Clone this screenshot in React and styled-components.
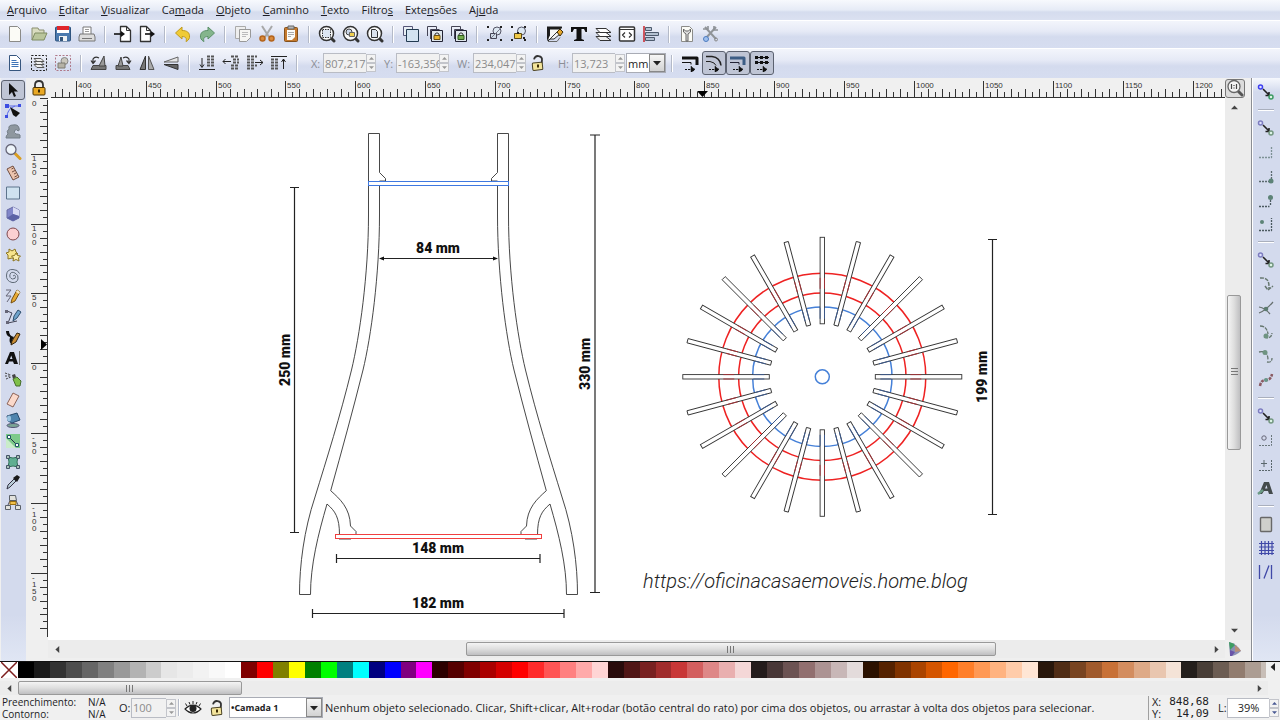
import React from 'react';
import styled, { createGlobalStyle } from 'styled-components';

const GlobalStyle = createGlobalStyle`
  * { box-sizing: border-box; }
  body { margin: 0; }
  body, button, input, select {
    font-family: "Open Sans", "Noto Sans", sans-serif;
    font-size: 11px;
    color: #1c1c24;
  }
  button { border: 0; padding: 0; background: none; }
`;

const Window = styled.div`
  display: flex;
  flex-direction: column;
  height: 100vh;
  overflow: hidden;
  background: #f0f0f0;
`;

/* ---------- icons ---------- */

const IconSvg = styled.svg`
  display: block;
  flex: none;
  width: 18px;
  height: 18px;
  fill: none;
  stroke-linejoin: round;
`;

const sheet = <path d="M3.5 1.5h8l3 3v12h-11z" fill="#fbfbf6" stroke="#8b8b88" />;
const lens = (
  <>
    <path d="M12.5 12.5l3.500 3.500" stroke="#333" strokeWidth="3" strokeLinecap="round" />
    <circle cx="8.500" cy="8.500" r="7" fill="#fafafa" stroke="#333" strokeWidth="1.500" />
  </>
);
const nodeLink = (a, b) => (
  <>
    <path d="M6 6l6 6M12 9v3.500H8.500" stroke="#222" strokeWidth="1.600" />
    <circle cx="3.500" cy="4" r="2" fill="#dfe3ff" stroke={a} strokeWidth="1.500" />
    <circle cx="14" cy="14" r="2" fill="#dcf3e4" stroke={b} strokeWidth="1.500" />
  </>
);
const corners = <path d="M1 1h2v2H1zM14 1h2v2h-2zM1 14h2v2H1zM14 14h2v2h-2z" fill="#222" />;
const pushArrow = <path d="M4 15.500h8M10 12.500l4 3-4 3z" fill="#111" stroke="#111" strokeDasharray="2 1" />;

const icons = {
  new: sheet,
  open: (
    <>
      <path d="M2 15V3h6l1 2h5v3" fill="#d9dcc0" stroke="#8a8f70" />
      <path d="M5 8h12l-3 7H2z" fill="#b9c59b" stroke="#7f8c62" />
    </>
  ),
  save: (
    <>
      <rect x="1.500" y="2" width="15" height="14" rx="1" fill="#4a79ae" stroke="#30557f" />
      <path d="M3 1h12v4H3z" fill="#e0262b" />
      <path d="M3 5h12v3H3z" fill="#fff" />
      <path d="M5 11h8v5H5z" fill="#eef1f4" />
      <path d="M6 12h3v4H6z" fill="#34567c" />
    </>
  ),
  print: (
    <>
      <path d="M5 9V2h8v7" fill="#fff" stroke="#777" />
      <path d="M7 4.500h4M7 6.500h4" stroke="#999" />
      <path d="M2 9h14l1 3v4H1v-4z" fill="#dcdcdc" stroke="#777" />
      <path d="M4 13.500h10" stroke="#777" />
    </>
  ),
  import: (
    <>
      <path d="M6.500 1.500h6l4 4v11h-10z" fill="#fff" stroke="#333" strokeWidth="1.300" />
      <path d="M12.500 1.500v4h4" stroke="#333" />
      <path d="M0 9h8" stroke="#111" strokeWidth="1.600" />
      <path d="M7 6l4 3-4 3z" fill="#111" />
    </>
  ),
  export: (
    <>
      <path d="M2.500 1.500h6l4 4v11h-10z" fill="#fff" stroke="#333" strokeWidth="1.300" />
      <path d="M8.500 1.500v4h4" stroke="#333" />
      <path d="M7 9h7" stroke="#111" strokeWidth="1.600" />
      <path d="M13 6l4 3-4 3z" fill="#111" />
    </>
  ),
  undo: <path d="M1.500 8L8 2v3.500c5 0 8 2 7.500 7-.5 2-2 3.500-3.500 4 1-3 0-5-4-5V14z" fill="#f0cb36" stroke="#c09a1c" />,
  redo: <path d="M16.500 8L10 2v3.500c-5 0-8 2-7.500 7 .5 2 2 3.500 3.500 4-1-3 0-5 4-5V14z" fill="#84b58c" stroke="#5b9068" />,
  copy: (
    <>
      <rect x="1.500" y="1.500" width="10" height="12" fill="#eee" stroke="#aaa" />
      <path d="M5.500 4.500h11v8l-4 4h-7z" fill="#f6f6f3" stroke="#999" />
      <path d="M8 7.500h6M8 9.500h6M8 11.500h4" stroke="#bbb" />
    </>
  ),
  cut: (
    <>
      <path d="M4 1l7 11M14 1L7 12" stroke="#a8a8a8" strokeWidth="2" />
      <circle cx="4.500" cy="13.500" r="2.500" fill="#d88a3c" stroke="#b4641c" strokeWidth="1.500" />
      <circle cx="13.500" cy="13.500" r="2.500" fill="#d88a3c" stroke="#b4641c" strokeWidth="1.500" />
    </>
  ),
  paste: (
    <>
      <rect x="2.500" y="2.500" width="13" height="14" rx="1" fill="#c57a2e" stroke="#83501c" />
      <path d="M5 5h8v7l-3 3H5z" fill="#fbfbf8" />
      <path d="M6 7.500h6M6 9.500h6M6 11.500h3" stroke="#aaa" />
      <rect x="6" y="1" width="6" height="3" fill="#b8b8b8" stroke="#666" />
    </>
  ),
  zoomSelection: <>{lens}<rect x="4.500" y="4.500" width="8" height="8" fill="#dde6f2" stroke="#333" strokeDasharray="1.500 1" /></>,
  zoomDrawing: <>{lens}<circle cx="7" cy="7" r="3" fill="#cbd6e8" stroke="#444" /><rect x="7.500" y="7.500" width="5" height="4" fill="#f0cf4e" stroke="#666" /></>,
  zoomPage: <>{lens}<path d="M5.500 4.500h4l2 2v6h-6z" fill="#dbe2ec" stroke="#333" /></>,
  duplicate: (
    <>
      <rect x="1.500" y="1.500" width="9" height="9" fill="#e9eff5" stroke="#557" />
      <rect x="4.500" y="4.500" width="12" height="12" fill="#d3e3f1" stroke="#223a50" />
    </>
  ),
  clone: (
    <>
      <path d="M1.500 11V1.500h9v3M4.500 14V4.500h9" stroke="#445" />
      <rect x="5.500" y="5.500" width="11" height="11" fill="#dfe6ec" stroke="#223" />
      <path d="M9 11V9q2-2.500 4 0v2" stroke="#333" />
      <rect x="8" y="10.500" width="6" height="4" fill="#e9b430" stroke="#6d5010" />
    </>
  ),
  unlinkClone: (
    <>
      <path d="M1.500 11V1.500h9v3M4.500 14V4.500h9" stroke="#445" />
      <rect x="5.500" y="5.500" width="11" height="11" fill="#dfe6ec" stroke="#223" />
      <path d="M9 11V9q2-2.500 4 0v1" stroke="#333" />
      <rect x="8" y="10.500" width="6" height="4" fill="#73ad4c" stroke="#2f5a1c" />
    </>
  ),
  group: (
    <>
      {corners}
      <circle cx="11" cy="6" r="4" fill="#dce7f2" stroke="#556" />
      <path d="M4.500 8.500h6v5h-6z" fill="#cfdbe8" stroke="#445" />
      <path d="M4 14L14 4" stroke="#778" />
    </>
  ),
  ungroup: (
    <>
      {corners}
      <circle cx="11.500" cy="6" r="4" fill="#dce7f2" stroke="#556" />
      <path d="M4.500 8.500h7v5h-7z" fill="#f0c948" stroke="#5d4b14" />
      <path d="M7 7h2v2H7zM13 12h2v2h-2z" fill="#222" />
    </>
  ),
  fill: (
    <>
      <path d="M2 2.500h14L2 16z" fill="#f7f7f7" stroke="#222" />
      <path d="M1 1.500h15l-2 3H4v6l-3 5z" fill="#1c1c1c" />
      <path d="M2 16.500h9l3-4" stroke="#666" />
      <path d="M4 14L12 6l2 3-6 5z" fill="#f4f4f4" stroke="#333" />
      <path d="M11 7l3-3 3 3-3 4z" fill="#e4a62c" stroke="#3d2c08" />
    </>
  ),
  text: <path d="M1 2h16v5h-1.500L14 4h-2.500v10l2.500 1v1H4v-1l2.500-1V4H4L2.500 7H1z" fill="#111" />,
  layers: (
    <>
      <path d="M2 11.500h10l5 4H6z" fill="#eee" stroke="#333" />
      <path d="M2 7.500h10l5 4H6z" fill="#fff" stroke="#333" />
      <path d="M2 3.500h10l5 4H6z" fill="#fff" stroke="#333" />
    </>
  ),
  xml: (
    <>
      <rect x="1.500" y="2" width="15" height="14" rx="1" fill="#fff" stroke="#333" strokeWidth="1.500" />
      <path d="M2 4.500h14" stroke="#333" />
      <path d="M7 7.500L4.500 10 7 12.500M11 7.500l2.500 2.500-2.500 2.500" stroke="#333" strokeWidth="1.200" />
    </>
  ),
  align: (
    <>
      <path d="M2 1v16" stroke="#c8252b" strokeWidth="1.500" />
      <path d="M3.500 2.500h6v3h-6zM3.500 7.500h13v3h-13zM3.500 12.500h9v3h-9z" fill="#b4c1d1" stroke="#4d5a6c" />
    </>
  ),
  prefs: (
    <>
      {sheet}
      <path d="M8 16V9L5.500 7V4l2 2h3l2-2v3L10 9v7z" fill="#ddd" stroke="#666" />
    </>
  ),
  docprops: (
    <>
      <path d="M3 2l11 12M14 2L4 13" stroke="#909498" strokeWidth="2" />
      <path d="M1 4h5V1M12 1v4h4" stroke="#8d9196" strokeWidth="1.600" />
      <circle cx="4" cy="14" r="2.500" fill="#9fc0ee" stroke="#4d7cc0" />
      <circle cx="14" cy="14.500" r="1.500" stroke="#888" />
    </>
  ),
  selectAll: (
    <>
      <path d="M3.500 1.500h7l4 4v11h-11z" fill="#fff" stroke="#36567f" />
      <path d="M5.500 6.500h5M5.500 8.500h7M5.500 10.500h7M5.500 12.500h7" stroke="#3f74b8" strokeWidth="1.200" />
    </>
  ),
  selectLayers: (
    <>
      <rect x="1.500" y="1.500" width="15" height="15" stroke="#222" strokeDasharray="2 1.500" />
      <path d="M4 10.500h7l3 3H7zM4 7.500h7l3 3H7zM4 4.500h7l3 3H7z" fill="#eee" stroke="#555" />
    </>
  ),
  deselect: (
    <>
      <rect x="1.500" y="1.500" width="15" height="15" stroke="#b07a8a" strokeDasharray="2 1.500" />
      <circle cx="10.500" cy="7" r="3.500" fill="#cac7bd" stroke="#888" />
      <path d="M4 9h7v5H4z" fill="#b5b2a6" stroke="#7c7a70" />
    </>
  ),
  rotateLeft: (
    <>
      <path d="M3 11.500h13v4H1z" fill="#777" stroke="#444" />
      <path d="M9 12l5-10 1 10z" fill="#999" stroke="#444" />
      <path d="M3 9V5q2-3 6-1M1 6.500l2 3 2.500-3" stroke="#333" strokeWidth="1.200" />
    </>
  ),
  rotateRight: (
    <>
      <path d="M2 11.500h12l2 4H2z" fill="#777" stroke="#444" />
      <path d="M4 12L7 3l2 9z" fill="#999" stroke="#444" />
      <path d="M9 4q4-2 6 1v4M12.500 6.500l2.500 3 2-3" stroke="#333" strokeWidth="1.200" />
    </>
  ),
  flipH: (
    <>
      <path d="M7.500 2v13.500H2z" fill="#777" stroke="#333" />
      <path d="M10.500 2v13.500H16z" fill="#aaa" stroke="#555" />
    </>
  ),
  flipV: (
    <>
      <path d="M16 3v5H2z" fill="#e6e6e6" stroke="#666" />
      <path d="M16 15.500v-5H2z" fill="#666" stroke="#333" />
    </>
  ),
  lowerBottom: (
    <>
      <path d="M9 2.500h8M9 5.500h8M9 8.500h8M9 11.500h8" stroke="#555" strokeWidth="2" strokeDasharray="3 1" />
      <path d="M1 15.500h16M4 4v9M2 10.500l2 3 2-3" stroke="#222" />
    </>
  ),
  lower: (
    <>
      <path d="M9 2.500h8M11 5.500h6M11 8.500h6M9 11.500h8M9 14.500h8" stroke="#555" strokeWidth="2" strokeDasharray="3 1" />
      <path d="M9 7.500H1M3.500 5L1 7.500 3.500 10" stroke="#222" />
    </>
  ),
  raise: (
    <>
      <path d="M1 2.500h10M1 5.500h8M1 8.500h8M1 11.500h10M1 14.500h7" stroke="#555" strokeWidth="2" strokeDasharray="3 1" />
      <path d="M9 8.500h8M14 6l3 2.500-3 2.500" stroke="#222" />
    </>
  ),
  raiseTop: (
    <>
      <path d="M1 5.500h8M1 8.500h8M1 11.500h8M1 14.500h8" stroke="#555" strokeWidth="2" strokeDasharray="3 1" />
      <path d="M1 2.500h16M13.500 15V5M11.500 8l2-3 2 3" stroke="#222" />
    </>
  ),
  scaleStroke: (
    <>
      <path d="M1 4h15v7" stroke="#111" strokeWidth="3" />
      <path d="M1 8.500h9v2" stroke="#111" />
      {pushArrow}
    </>
  ),
  scaleCorners: (
    <>
      <path d="M1 2.500h6q8 1 9 9" stroke="#222" strokeWidth="1.500" />
      <path d="M1 7.500h4q5 1 6 4" stroke="#222" />
      {pushArrow}
    </>
  ),
  moveGradients: (
    <>
      <path d="M1 4h14v7" stroke="#3c5d85" strokeWidth="3" />
      <path d="M1 8.500h9v2" stroke="#223" />
      {pushArrow}
    </>
  ),
  movePatterns: (
    <>
      <path d="M2 3.500h14M2 8.500h14" stroke="#111" strokeWidth="3" strokeDasharray="3 2" />
      <path d="M2 3.500h14M2 8.500h14" stroke="#111" />
      {pushArrow}
    </>
  ),
  lock: (
    <>
      <path d="M5 9V6q0-4 4-4t4 4v3" stroke="#333" strokeWidth="1.800" />
      <rect x="3" y="8.500" width="12" height="7.500" rx="1" fill="#e9a824" stroke="#4a3203" />
      <path d="M9 10.500v3" stroke="#3b2a04" strokeWidth="2" />
    </>
  ),
  unlock: (
    <>
      <path d="M5 6q0-4 4-4t4 4v3" stroke="#333" strokeWidth="1.800" transform="rotate(8 9 6)" />
      <rect x="3.500" y="8.500" width="10" height="7.500" rx="1" fill="#f3e49b" stroke="#4a4223" transform="rotate(-6 9 12)" />
      <path d="M9 10.500v3" stroke="#3b2a04" strokeWidth="2" />
    </>
  ),
  pointer: <path d="M5 2v12l3-3 2 5 2-1-2-4.500h4z" fill="#111" />,
  node: (
    <>
      <path d="M3 15q0-8 8-11M3 4h12" stroke="#5a69e8" />
      <path d="M1 2h4v4H1zM14 2h3v3h-3zM1 13h3v3H1z" fill="#3d4ee2" />
      <path d="M6 5l10 6-4 4-3-2z" fill="#111" />
    </>
  ),
  tweak: <path d="M2 16q0-3 2-4-2-3 1-5-1-4 4-4 5-1 6 3 1 3-1 3-1-2-3-1-2 3 1 4 3 0 4 1v3z" fill="#8e979f" stroke="#737d86" />,
  zoom: (
    <>
      <path d="M11 10.500l5 5" stroke="#d99e22" strokeWidth="3" strokeLinecap="round" />
      <circle cx="7" cy="6.500" r="5" fill="#eef5fb" stroke="#667" strokeWidth="1.300" />
    </>
  ),
  measure: (
    <>
      <path d="M3 5l6-3 6 11-6 3z" fill="#ecc4ae" stroke="#704e40" />
      <path d="M9.500 4l-2 1M11 6.500l-3 1.500M12 9l-2 1M13.500 11.500l-3 1.500" stroke="#704e40" />
    </>
  ),
  rect: <rect x="2.500" y="3" width="13" height="12" fill="#cfe2f0" stroke="#5d748c" />,
  box: (
    <>
      <path d="M9 2l6 3v8l-6 3-6-3V5z" fill="#8186c9" stroke="#6a6ea6" />
      <path d="M9 2l6 3v6l-6-2z" fill="#d8dbf4" />
      <path d="M9 9l6 2v2l-6 3-6-3z" fill="#5c62a6" />
    </>
  ),
  ellipse: <circle cx="9" cy="9" r="6" fill="#fbd0d2" stroke="#80484c" />,
  star: (
    <>
      <path d="M5 3l3 2 3-2 1 3 2 2-3 2v3l-3-1-4 1V9L2 7l3-1z" fill="#f6e48c" stroke="#8c7522" />
      <path d="M12 7l1.500 2.500 3 .5-2 2 .5 3-3-1.500L9 15l.5-3-2-2 3-.5z" fill="#fbefa9" stroke="#8c7522" />
    </>
  ),
  spiral: <path d="M9 9q2-2 2.500.5T8.500 12Q5 11 6 7.500T11 6q4 2 3 6t-6 3.500Q2 14 2.500 8T9 2.500q5 0 6.500 4" stroke="#606b78" />,
  pencil: (
    <>
      <path d="M2 3h5L2 9h5l-4 6" stroke="#667" />
      <path d="M8 12l5-9 3 2-5 9-4 2z" fill="#e8aa33" stroke="#765012" />
      <path d="M13 3l3 2-1 2-3-2z" fill="#f5e6c4" />
    </>
  ),
  bezier: (
    <>
      <path d="M3 3l5 2-4 10 9-2" stroke="#445" />
      <path d="M10 8l4-6 3 2-4 6-4 3z" fill="#6fa3cc" stroke="#2f4f6c" />
      <path d="M1 2h3v3H1zM2 13h3v3H2z" fill="#667" />
    </>
  ),
  calligraphy: (
    <>
      <path d="M2 2q0 5 4 6-2 8 4 7-3-3 0-7-5-1-5-6z" fill="#111" />
      <path d="M8 12l5-8 3 1-4 8-5 3z" fill="#c98d36" stroke="#33250e" />
    </>
  ),
  letter: (
    <>
      <path d="M1 15L6 3h4l4 12h-4l-1-2.500H5L4 15zM6 10h2.500L7.200 6.500z" fill="#111" fillRule="evenodd" />
      <path d="M15.500 2v14" stroke="#777" />
    </>
  ),
  spray: (
    <>
      <path d="M1 3l6 2M1 6h6M2 9l5-2" stroke="#444" strokeDasharray="2 1" />
      <path d="M8 5l3-1 1 3-3 2z" fill="#444" />
      <path d="M9 9l4-2 4 4-1 5h-4z" fill="#7fc04a" stroke="#466c2c" />
    </>
  ),
  eraser: <path d="M9 2l6 3-6 11-6-3z" fill="#fbd9cb" stroke="#8c6459" />,
  bucket: (
    <>
      <ellipse cx="9" cy="14.500" rx="6" ry="2" fill="#7aa495" stroke="#557" />
      <path d="M3 5l10-3 3 7-8 3-4-2z" fill="#4e83ad" stroke="#26486a" />
      <ellipse cx="5" cy="7.500" rx="2" ry="3" fill="#9cc6e2" />
    </>
  ),
  gradient: (
    <>
      <rect x="2" y="2" width="14" height="14" fill="#7cca8a" />
      <path d="M2 16V6l10 10z" fill="#c9ecc9" />
      <path d="M5 5l8 8" stroke="#234" />
      <path d="M3.500 3.500h3v3h-3zM11.500 11.500h3v3h-3z" fill="#fff" stroke="#256" />
    </>
  ),
  mesh: (
    <>
      <path d="M4 4q5 2 10 0-2 5 0 10-5-2-10 0 2-5 0-10z" fill="#5fae91" stroke="#33705a" />
      <path d="M2.500 2.500h3v3h-3zM12.500 2.500h3v3h-3zM2.500 12.500h3v3h-3zM12.500 12.500h3v3h-3z" fill="#a9bfb6" stroke="#456" />
    </>
  ),
  dropper: (
    <>
      <path d="M3 16l1-4 6-6 2 2-6 6z" fill="#b9ccd8" stroke="#334" />
      <path d="M9 5l4-3 3 2-3 5z" fill="#1a1a1a" />
    </>
  ),
  connector: (
    <>
      <path d="M6 6.500L4 11M12 6.500l2 4.500M9 5v5" stroke="#556" />
      <path d="M5.500 1.500h6l1 5h-7zM1.500 11.500h5v4h-5zM11.500 11.500h5v4h-5z" fill="#e2e2dd" stroke="#5a6068" />
      <path d="M6 7.500h6v3H6z" fill="#f2c14a" stroke="#976d12" />
    </>
  ),
  snap: nodeLink('#3d3ff0', '#3c9a63'),
  snapBox: nodeLink('#7c7cc0', '#739780'),
  snapEdge: <path d="M2 14.500h12.500V3" stroke="#7e9296" strokeDasharray="2 1" strokeWidth="1.300" />,
  snapCorner: <><path d="M2 14.500h12.500V3" stroke="#5b6a70" strokeDasharray="2 1" strokeWidth="1.300" /><circle cx="14" cy="14" r="2.500" fill="#5d8377" /></>,
  snapMid: <><path d="M2 15.500h10.500M13.500 14V5" stroke="#4b5a60" strokeDasharray="2 1" strokeWidth="1.300" /><circle cx="13.500" cy="6.500" r="2.500" fill="#5d8377" /></>,
  snapCenter: <><path d="M2 15.500h12.500V3" stroke="#4b5a60" strokeDasharray="2 1" strokeWidth="1.300" /><circle cx="5" cy="7" r="2" fill="#5d8377" /></>,
  snapPath: <path d="M3 3q9-1 9 8v3M8 11l3 4 5-4" stroke="#66776f" strokeWidth="1.500" strokeDasharray="4 1" />,
  snapCross: <><path d="M2 14Q8 12 16 3M2 8q6 1 11 7" stroke="#66706e" strokeWidth="1.200" /><circle cx="9" cy="10" r="2.300" fill="#5c7b70" /></>,
  snapCusp: <><path d="M3 3q7 0 8 8M7 14q7 3 8-4" stroke="#66776f" strokeWidth="1.300" strokeDasharray="4 1" /><circle cx="9" cy="13" r="2.500" fill="#6f9482" /></>,
  snapSmooth: <><path d="M2 5q9-2 9 8M10 15q5 1 5-4" stroke="#66776f" strokeWidth="1.300" strokeDasharray="4 1" /><circle cx="8" cy="5.500" r="2.500" fill="#6f9482" /></>,
  snapLine: <><path d="M3 15Q4 9 9 9t6-6" stroke="#8a5a62" strokeWidth="2.500" strokeDasharray="3 1" /><circle cx="9" cy="9" r="2" fill="#66988a" /></>,
  snapObj: <><path d="M2 14.500h12.500V4" stroke="#6a777c" strokeDasharray="2 1" /><circle cx="7" cy="7" r="2.200" stroke="#667" /></>,
  snapRot: <><path d="M2 15.500h12.500V5" stroke="#5a676c" strokeDasharray="2 1" /><path d="M4 8.500h6M7 5v7" stroke="#5a676c" /></>,
  snapText: <><path d="M2 15L7 3h5l4 12h-4l-1-3H7l-2 3zM8 9.500h2.500L9.500 6z" fill="#444b4c" fillRule="evenodd" /><path d="M1 15l5-4" stroke="#6a9a84" strokeWidth="2.500" /></>,
  snapPage: <rect x="3.500" y="2.500" width="11" height="14" rx="1" fill="#cfd0cc" stroke="#686868" strokeWidth="1.400" />,
  snapGrid: <path d="M4.500 2v14M8 2v14M11.500 2v14M15 2v14M2 4.500h15M2 8h15M2 11.500h15M2 14.500h15" stroke="#4049a8" strokeWidth="1.200" />,
  snapGuide: <path d="M2.500 2v14M14.500 2v14M7 15.500L12 2.500" stroke="#4049a8" strokeWidth="1.300" />,
  eye: (
    <>
      <path d="M1 10q8-8 16 0-8 8-16 0z" fill="#fff" stroke="#222" strokeWidth="1.200" />
      <circle cx="9" cy="9.500" r="3.500" fill="#222" />
      <path d="M3 7L1.500 4.500M6 5.500L5 3M9 5V2M12 5.500L13 3M15 7l1.500-2.500" stroke="#222" />
    </>
  ),
  zoomOne: (
    <>
      <path d="M12 12l4 4" stroke="#555" strokeWidth="3" strokeLinecap="round" />
      <circle cx="8" cy="7.500" r="6" fill="#f4f4f4" stroke="#666" strokeWidth="1.300" />
      <path d="M5.500 5v5M10.500 5v5M8 6v1M8 8.500v1" stroke="#444" strokeWidth="1.200" />
    </>
  ),
  cms: (
    <>
      <path d="M4 2q8 2 12 9-5 5-11 5z" fill="#8b8fb4" />
      <path d="M4 2q4 1 6 3l-5 5z" fill="#3f9e62" />
      <path d="M10 5q4 3 6 6l-6 1z" fill="#b98f76" />
      <path d="M5 10l5 2-3 4H5z" fill="#6a54a8" />
    </>
  ),
};

const Icon = ({ name }) => (
  <IconSvg viewBox="0 0 18 18" aria-hidden="true">{icons[name]}</IconSvg>
);

/* ---------- bars ---------- */

const MenuBar = styled.nav`
  display: flex;
  flex: none;
  gap: 12px;
  height: 20px;
  padding: 0 7px;
  background: linear-gradient(#f7f9fd, #e6ebf6 50%, #d5dcee 60%, #dbe1f1);
`;

const MenuItem = styled.button`
  font-size: 11px;
  line-height: 20px;
  white-space: nowrap;
`;

const Bar = styled.div`
  display: flex;
  flex: none;
  align-items: center;
  height: ${p => p.$height}px;
  padding-left: 3px;
  box-shadow: inset 0 1px #fff;
  background: linear-gradient(#f4f6fc, #e6eaf6 40%, #d4dbee 60%, #d6ddf0);
`;

const ToolButton = styled.button`
  display: flex;
  flex: none;
  align-items: center;
  justify-content: center;
  width: 24px;
  height: 24px;
  border: 1px solid ${p => (p.$active ? '#5c6270' : 'transparent')};
  border-radius: 3px;
  background: ${p => (p.$active ? '#bfc5d5' : 'none')};
`;

const Divider = styled.span`
  flex: none;
  width: 2px;
  height: 17px;
  margin: 0 5px;
  border-left: 1px solid #b4bac8;
  background: #fff;
`;

const Field = styled.div`
  display: flex;
  flex: none;
  align-items: center;
  margin-right: ${p => p.$after || 0}px;
  color: ${p => (p.$dark ? '#222' : '#8b8e96')};
  label { width: ${p => p.$label}px; font-size: 11px; }
`;

const NumberInput = styled.input`
  width: ${p => p.$width}px;
  height: 20px;
  padding: 0 0 0 ${p => (p.$live ? 0 : 1)}px;
  border: 1px solid #b9bcc4;
  border-right: 0;
  background: ${p => (p.$live ? '#fff' : '#f1f1f1')};
  color: ${p => (p.$live ? '#222' : '#8b8b8b')};
  font-size: 11px;
  text-align: ${p => (p.$live ? 'center' : 'left')};
`;

const SpinBox = styled.span`
  display: flex;
  flex-direction: column;
  width: 10px;
  height: 18px;
`;

const SpinButton = styled.button`
  display: flex;
  flex: 1;
  align-items: center;
  justify-content: center;
  border: 1px solid #c3c5cb;
  background: #f3f3f3;
`;

const Triangle = styled.svg`
  display: block;
  width: ${p => p.$size || 5}px;
  height: ${p => p.$size || 5}px;
  fill: ${p => p.$color || '#222'};
`;

const paths = {
  up: 'M0 7.500L5 2l5 5.500z',
  down: 'M0 2.500L5 8l5-5.500z',
  left: 'M7.500 0L2 5l5.500 5z',
  right: 'M2.500 0L8 5l-5.500 5z',
};

const Arrow = ({ dir, size, color }) => (
  <Triangle viewBox="0 0 10 10" $size={size} $color={color} aria-hidden="true">
    <path d={paths[dir]} />
  </Triangle>
);

const Spinner = ({ color = '#999' }) => (
  <SpinBox>
    <SpinButton aria-label="+"><Arrow dir="up" color={color} /></SpinButton>
    <SpinButton aria-label="-"><Arrow dir="down" color={color} /></SpinButton>
  </SpinBox>
);

const Combo = styled.div`
  display: grid;
  flex: none;
  grid-template-columns: 1fr 16px;
  width: ${p => p.$width}px;
  height: ${p => p.$height}px;
  border: 1px solid #a9acb5;
  background: #fff;
  select {
    grid-area: 1 / 1 / 2 / 3;
    min-width: 0;
    padding: 0 0 0 1px;
    border: 0;
    appearance: none;
    background: none;
    font-size: ${p => (p.$bold ? 9 : 11)}px;
    font-weight: ${p => (p.$bold ? 700 : 400)};
  }
  span {
    grid-area: 1 / 2;
    display: flex;
    align-items: center;
    justify-content: center;
    border: 1px solid #888;
    background: linear-gradient(#f6f6f6, #d2d2d2);
    pointer-events: none;
  }
`;

/* ---------- work area ---------- */

const Workspace = styled.div`
  display: flex;
  flex: 1;
  min-height: 0;
`;

const Toolbox = styled.div`
  flex: none;
  width: 26px;
  padding: 2px 1px 0 0;
  border-left: 1px solid #f0f0f0;
  background: linear-gradient(#e6eaf6, #d3daed 12px, #d3daed 92%, #e0e6f4);
`;

const ToolList = styled.div`
  display: flex;
  flex-direction: column;
  justify-content: space-between;
  align-items: center;
  height: 433px;
  ${ToolButton} { height: 20px; }
`;

const SnapBar = styled.div`
  display: flex;
  flex: none;
  flex-direction: column;
  align-items: center;
  width: 29px;
  padding-top: 2px;
  border-left: 1px solid #8b8e94;
  box-shadow: inset 1px 0 #fff;
  background: linear-gradient(#f6f8fd, #d3daed 14px, #d3daed 92%, #e0e6f4);
`;

const SnapDivider = styled.span`
  flex: none;
  width: 16px;
  height: 2px;
  margin: 5px 0;
  border-top: 1px solid #a9afbd;
  background: #fff;
`;

const Editor = styled.div`
  display: grid;
  flex: 1;
  min-width: 0;
  grid-template-columns: 22px 1fr 26px;
  grid-template-rows: 20px 1fr 18px;
  padding-bottom: 3px;
  background: #efefef;
`;

const Cell = styled.div`
  display: flex;
  align-items: center;
  justify-content: ${p => p.$align || 'center'};
`;

const LensButton = styled(ToolButton)`
  width: 20px;
  height: 19px;
  border-color: #777;
  background: #dcdcdc;
`;

const Surface = styled.svg`
  display: block;
  width: 100%;
  height: 100%;
  min-height: 0;
  overflow: hidden;
  background: ${p => p.$bg || '#f0f0f0'};
`;

const RulerText = styled.text`
  fill: #333;
  font-family: "Liberation Sans", sans-serif;
  font-size: 8px;
`;

const Dim = styled.text`
  fill: #111;
  font-family: Roboto, sans-serif;
  font-size: 14px;
  font-weight: 900;
  text-anchor: middle;
`;

const Link = styled.text`
  fill: #222;
  font-family: Roboto, sans-serif;
  font-size: 20px;
  font-style: italic;
  font-weight: 300;
`;

const Scroll = styled.div`
  display: flex;
  flex-direction: ${p => (p.$vertical ? 'column' : 'row')};
  align-items: center;
  padding: ${p => (p.$vertical ? '0 8px 0 0' : '0')};
  min-width: 0;
  min-height: 0;
  background: #ececec;
  > button { display: flex; flex: 0 0 18px; align-items: center; justify-content: center; }
`;

const Space = styled.span`
  flex: ${p => p.$grow} 1 0;
`;

const Thumb = styled.div`
  display: flex;
  flex: ${p => p.$grow} 1 0;
  flex-direction: ${p => (p.$vertical ? 'column' : 'row')};
  align-items: center;
  justify-content: center;
  gap: 1px;
  width: ${p => (p.$vertical ? '14px' : 'auto')};
  height: ${p => (p.$vertical ? 'auto' : '14px')};
  border: 1px solid #999;
  border-radius: 2px;
  background: linear-gradient(${p => (p.$vertical ? '90deg' : '180deg')}, #f4f4f4, #dedede 50%, #bfbfc1);
  i {
    width: ${p => (p.$vertical ? '7px' : '2px')};
    height: ${p => (p.$vertical ? '2px' : '7px')};
    border: 0 solid #777;
    border-width: ${p => (p.$vertical ? '1px 0 0' : '0 0 0 1px')};
  }
`;

const Scrollbar = ({ vertical, parts }) => (
  <Scroll $vertical={vertical}>
    <button aria-label="back"><Arrow dir={vertical ? 'up' : 'left'} size={7} color="#444" /></button>
    {parts[0] > 0 && <Space $grow={parts[0]} />}
    <Thumb $vertical={vertical} $grow={parts[1]}><i /><i /><i /></Thumb>
    <Space $grow={parts[2]} />
    <button aria-label="forward"><Arrow dir={vertical ? 'down' : 'right'} size={7} color="#444" /></button>
  </Scroll>
);

/* ruler step: 5 units, 69.8px for every 50 */
const STEP = 6.98;

const tickLevel = i => (i % 10 === 0 ? 0 : i % 2 === 0 ? 1 : 2);

const TopRuler = () => {
  const ticks = [];
  for (let i = -3; i < 165; i += 1) {
    const x = Math.round(28 + i * STEP) + 0.5;
    ticks.push(<path key={i} d={`M${x} ${[3, 11, 14][tickLevel(i)]}V20`} />);
  }
  return (
    <Surface>
      <g stroke="#333">{ticks}<path d="M3 19.500H4000" /></g>
      {Array.from({ length: 17 }, (_, n) => (
        <RulerText key={n} x={Math.round(30 + n * STEP * 10)} y="10">{400 + n * 50}</RulerText>
      ))}
      <path d="M649 13h11l-5.500 6z" fill="#000" />
    </Surface>
  );
};

const rulerMarks = ['0', '150', '100', '50', '0', '-50', '-100', '-150'];

const SideRuler = () => {
  const ticks = [];
  for (let i = 2; i < 79; i += 1) {
    const y = Math.round(i * STEP - 14) + 0.5;
    ticks.push(<path key={i} d={`M${[5, 14, 17][tickLevel(i)]} ${y}H22`} />);
  }
  return (
    <Surface>
      <g stroke="#333">{ticks}<path d="M21.500 2V539" /></g>
      {rulerMarks.map((value, n) => (
        <RulerText key={n} y={n === 0 ? 8 : Math.round(n * STEP * 10 - 7)}>
          {value.split('').map((ch, k) => <tspan key={k} x="6" dy={k ? 7 : 0}>{ch}</tspan>)}
        </RulerText>
      ))}
      <path d="M15 241v11l6-5.500z" fill="#000" />
    </Surface>
  );
};

const Leg = () => (
  <>
    <path d="M379.500 185V215C379.500 275 371 337 363 370C353 410 342 450 330.700 490.700C340 499 350 508 350.500 526L356 531.500V535" />
    <path d="M379.500 181H385.500V178.500L379.500 172.500V133.500H368.500V215C368.500 275 359.500 337 351.500 370C340 417 327 458 315 497C304 530 299.500 565 299.500 594.500H310.500C310.500 565 318 535 327 504C335 511 339.500 517 339.500 535" />
  </>
);

const Stand = () => (
  <g fill="none" stroke="#333" strokeWidth="0.900">
    <Leg />
    <g transform="translate(877 0) scale(-1 1)"><Leg /></g>
    <path d="M339 539.500h12M525 539.500h12" stroke="#999" />
    <rect x="368.500" y="181.500" width="140" height="4" fill="#fff" stroke="#3f78e0" strokeWidth="1" />
    <rect x="335.500" y="534.500" width="206" height="4" fill="#fff" stroke="#f04040" strokeWidth="1" />
  </g>
);

const Wheel = () => (
  <g transform="translate(822.300 376.800)" fill="none">
    <g stroke="#ee2222" strokeWidth="1.500">
      <circle r="103.500" />
      <circle r="83.700" />
    </g>
    <g stroke="#4580d8" strokeWidth="1.500">
      <circle r="69.700" />
      <circle r="7" />
    </g>
    {Array.from({ length: 24 }, (_, i) => (
      <g key={i} transform={`rotate(${i * 15})`}>
        <rect x="53" y="-2.200" width="86.500" height="4.400" fill="#fff" stroke="#333" strokeWidth="0.900" />
        <path d="M88 -2.200H99M88 2.200H99" stroke="#a83034" strokeWidth="0.900" />
        <path d="M58 -2.200H69M58 2.200H69" stroke="#3b5a90" strokeWidth="0.900" />
      </g>
    ))}
  </g>
);

const Drawing = () => (
  <Surface $bg="#fff">
    <g transform="translate(-48 -98)">
      <Stand />
      <Wheel />
      <g stroke="#222" strokeWidth="1.200" fill="none">
        <path d="M294.500 187.500V532.500M290 187.500h9M290 532.500h9" />
        <path d="M595 135V592.500M590 135h10M590 592.500h10" />
        <path d="M992.500 239.500V514.500M988 239.500h9M988 514.500h9" />
        <path d="M336.500 558.500H540M336.500 554v9M540 554v9" />
        <path d="M312.500 613.500H564M312.500 609v9M564 609v9" />
        <path d="M381 258.500H496" />
      </g>
      <path d="M379 258.500l5-2v4zM498 258.500l-5-2v4z" fill="#111" />
      <Dim x="438" y="253">84 mm</Dim>
      <Dim x="438" y="553">148 mm</Dim>
      <Dim x="438" y="608">182 mm</Dim>
      <Dim transform="translate(290 360) rotate(-90)">250 mm</Dim>
      <Dim transform="translate(590 364) rotate(-90)">330 mm</Dim>
      <Dim transform="translate(987 377) rotate(-90)">199 mm</Dim>
      <Link x="643" y="588">https://oficinacasaemoveis.home.blog</Link>
    </g>
  </Surface>
);

/* ---------- palette and status ---------- */

const Palette = styled.div`
  display: flex;
  flex: none;
  height: 20px;
  padding-bottom: 3px;
  border-top: 1px solid #111;
`;

const Swatches = styled.div`
  display: flex;
  flex: 1;
`;

const Swatch = styled.button`
  flex: ${p => (p.$cut ? 1 : 3)} 1 0;
  background: ${p => p.$color};
`;

const NoColor = styled.button`
  flex: none;
  width: 18px;
  padding-left: 1px;
  background: #fff;
  svg { display: block; width: 16px; height: 16px; }
`;

const PaletteMenu = styled.button`
  display: flex;
  align-items: center;
  justify-content: center;
  width: 14px;
  height: 10px;
`;

const PaletteScroll = styled.div`
  flex: none;
  height: 14px;
  padding-right: 12px;
  > div { height: 14px; }
`;

const StatusBar = styled.footer`
  display: flex;
  flex: none;
  align-items: center;
  height: 25px;
  padding-left: 2px;
`;

const StyleInfo = styled.dl`
  display: grid;
  flex: none;
  grid-template-columns: 86px 31px;
  margin: 0;
  font-size: 10px;
  line-height: 12px;
  dd { margin: 0; }
`;

const StatusDivider = styled(Divider)`
  margin: 0 1px 0 2px;
`;

const Message = styled.p`
  flex: 1;
  min-width: 0;
  margin: 0 0 0 2px;
  overflow: hidden;
  white-space: nowrap;
  font-size: 11px;
  line-height: 20px;
`;

const Coords = styled.dl`
  display: grid;
  flex: none;
  grid-template-columns: 14px 43px;
  margin: 0 9px 0 0;
  padding-left: 3px;
  border-left: 1px solid #a0a0a0;
  line-height: 12px;
  dd {
    margin: 0;
    font-family: "DejaVu Sans Mono", monospace;
    font-size: 11px;
    text-align: right;
  }
`;

const menus = [
  ['', 'A', 'rquivo'], ['', 'E', 'ditar'], ['', 'V', 'isualizar'], ['Ca', 'm', 'ada'], ['', 'O', 'bjeto'],
  ['', 'C', 'aminho'], ['', 'T', 'exto'], ['Filtro', 's', ''], ['Exte', 'n', 'sões'], ['Aj', 'u', 'da'],
];

const commands = `new open save print | import export | undo redo | copy cut paste | zoomSelection zoomDrawing zoomPage |
  duplicate clone unlinkClone | group ungroup | fill text layers xml align | prefs docprops`.split(/\s+/);

const selectorTools = `selectAll selectLayers deselect | rotateLeft rotateRight flipH flipV |
  lowerBottom lower raise raiseTop |`.split(/\s+/);

const tools = `pointer node tweak zoom measure rect box ellipse star spiral pencil bezier calligraphy letter
  spray eraser bucket gradient mesh dropper connector`.split(/\s+/);

const snaps = `snap | snapBox snapEdge snapCorner snapMid snapCenter | snapBox snapPath snapCross snapCusp snapSmooth
  snapLine | snapBox snapObj snapRot snapText | snapPage snapGrid snapGuide`.split(/\s+/);

const colors = `000000 1a1a1a 333333 4d4d4d 666666 808080 999999 b3b3b3 cccccc e6e6e6 ececec f2f2f2 f9f9f9 ffffff
  800000 ff0000 808000 ffff00 008000 00ff00 008080 00ffff 000080 0000ff 800080 ff00ff
  2b0000 550000 800000 aa0000 d40000 ff0000 ff2a2a ff5555 ff8080 ffaaaa ffd5d5
  280b0b 501616 782121 a02c2c c83737 d35f5f de8787 e9afaf f4d7d7
  241c1c 483737 6c5353 916f6f ac9393 c8b7b7 e3dbdb
  2b1100 552200 803300 aa4400 d45500 ff6600 ff7f2a ff9955 ffb380 ffccaa ffe6d5
  28170b 502d16 784421 a05a2c c87137 d38d5f deaa87 e9c6af f4e3d7
  241f1c 483e37 6c5d53 917c6f ac9d93 c8beb7`.split(/\s+/);

const renderTools = (names, Sep, active) =>
  names.map((name, i) =>
    name === '|'
      ? <Sep key={i} />
      : <ToolButton key={i} aria-label={name} $active={name === active}><Icon name={name} /></ToolButton>
  );

const Measure = ({ id, name, value, label, after }) => (
  <Field $label={label} $after={after}>
    <label htmlFor={id}>{name}</label>
    <NumberInput id={id} $width={43} defaultValue={value} />
    <Spinner />
  </Field>
);

const App = () => (
  <Window>
    <GlobalStyle />
    <MenuBar>
      {menus.map(([a, key, b]) => (
        <MenuItem key={a + key + b}>{a}<u>{key}</u>{b}</MenuItem>
      ))}
    </MenuBar>
    <Bar $height={28}>{renderTools(commands, Divider)}</Bar>
    <Bar $height={30}>
      {renderTools(selectorTools, Divider)}
      <Field $label={8} $after={8} />
      <Measure id="x" name="X:" value="807,217" label={12} after={8} />
      <Measure id="y" name="Y:" value="-163,356" label={12} after={8} />
      <Measure id="w" name="W:" value="234,047" label={16} />
      <ToolButton aria-label="lock ratio"><Icon name="unlock" /></ToolButton>
      <Field $label={0} $after={8} />
      <Measure id="h" name="H:" value="13,723" label={14} after={1} />
      <Combo $width={40} $height={20}>
        <select aria-label="unit"><option>mm</option></select>
        <span><Arrow dir="down" size={8} /></span>
      </Combo>
      <Divider />
      <ToolButton aria-label="stroke"><Icon name="scaleStroke" /></ToolButton>
      <ToolButton aria-label="corners" $active><Icon name="scaleCorners" /></ToolButton>
      <ToolButton aria-label="gradients" $active><Icon name="moveGradients" /></ToolButton>
      <ToolButton aria-label="patterns" $active><Icon name="movePatterns" /></ToolButton>
    </Bar>

    <Workspace>
      <Toolbox><ToolList>{renderTools(tools, Divider, 'pointer')}</ToolList></Toolbox>
      <Editor>
        <Cell $align="flex-end"><Icon name="lock" /></Cell>
        <TopRuler />
        <Cell $align="flex-start"><LensButton aria-label="zoom 1:1"><Icon name="zoomOne" /></LensButton></Cell>
        <SideRuler />
        <Drawing />
        <Scrollbar vertical parts={[179, 154, 172]} />
        <Cell />
        <Scrollbar parts={[401, 529, 211]} />
        <Cell $align="flex-start"><Icon name="cms" /></Cell>
      </Editor>
      <SnapBar>{renderTools(snaps, SnapDivider)}</SnapBar>
    </Workspace>

    <Palette>
      <NoColor aria-label="none">
        <svg viewBox="0 0 16 16"><path d="M0 0l16 16M16 0L0 16" stroke="#7d1d1d" strokeWidth="1.500" /></svg>
      </NoColor>
      <Swatches>
        {colors.map((c, i) => <Swatch key={i} aria-label={c} $color={`#${c}`} $cut={i === colors.length - 1} />)}
      </Swatches>
      <PaletteMenu aria-label="palette"><Arrow dir="left" size={8} /></PaletteMenu>
    </Palette>
    <PaletteScroll><Scrollbar parts={[0, 222, 1010]} /></PaletteScroll>

    <StatusBar>
      <StyleInfo>
        <dt>Preenchimento:</dt><dd>N/A</dd>
        <dt>Contorno:</dt><dd>N/A</dd>
      </StyleInfo>
      <Field $label={12} $dark>
        <label htmlFor="opacity">O:</label>
        <NumberInput id="opacity" $width={35} defaultValue="100" />
        <Spinner />
      </Field>
      <StatusDivider />
      <ToolButton aria-label="visible"><Icon name="eye" /></ToolButton>
      <ToolButton aria-label="locked"><Icon name="unlock" /></ToolButton>
      <Combo $width={94} $height={21} $bold>
        <select aria-label="layer"><option>•Camada 1</option></select>
        <span><Arrow dir="down" size={8} /></span>
      </Combo>
      <Message>
        Nenhum objeto selecionado. Clicar, Shift+clicar, Alt+rodar (botão central do rato) por cima dos objetos, ou arrastar à volta dos objetos para selecionar.
      </Message>
      <Coords>
        <dt>X:</dt><dd>848,68</dd>
        <dt>Y:</dt><dd>14,09</dd>
      </Coords>
      <Field $label={9} $after={1} $dark>
        <label htmlFor="zoom">L:</label>
        <NumberInput id="zoom" $live $width={42} defaultValue="39%" />
        <Spinner color="#4a5a94" />
      </Field>
    </StatusBar>
  </Window>
);

export default App;
